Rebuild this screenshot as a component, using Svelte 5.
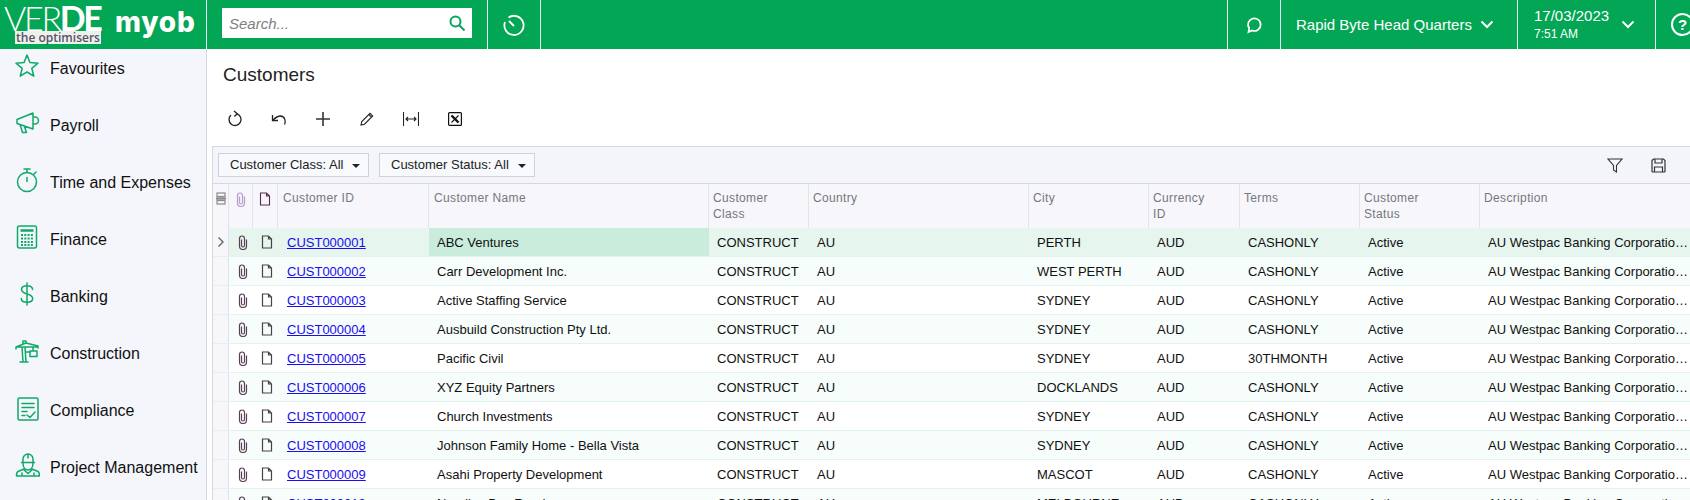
<script>
  const nav = ['Favourites','Payroll','Time and Expenses','Finance','Banking','Construction','Compliance','Project Management'];
  const rows = [
    ['CUST000001','ABC Ventures','PERTH','CASHONLY'],
    ['CUST000002','Carr Development Inc.','WEST PERTH','CASHONLY'],
    ['CUST000003','Active Staffing Service','SYDNEY','CASHONLY'],
    ['CUST000004','Ausbuild Construction Pty Ltd.','SYDNEY','CASHONLY'],
    ['CUST000005','Pacific Civil','SYDNEY','30THMONTH'],
    ['CUST000006','XYZ Equity Partners','DOCKLANDS','CASHONLY'],
    ['CUST000007','Church Investments','SYDNEY','CASHONLY'],
    ['CUST000008','Johnson Family Home - Bella Vista','SYDNEY','CASHONLY'],
    ['CUST000009','Asahi Property Development','MASCOT','CASHONLY'],
    ['CUST000010','Needles Bay Road','MELBOURNE','CASHONLY']
  ];
  const heads = [['Customer ID'],['Customer Name'],['Customer','Class'],['Country'],['City'],['Currency','ID'],['Terms'],['Customer','Status'],['Description']];
</script>

{#snippet clip(color)}
  <svg width="10" height="15" viewBox="0 0 10 15" fill="none" stroke={color} stroke-width="1.200"><path d="M8.500 4.500v6.500a3.500 3.500 0 0 1-7 0V3.500a2.500 2.500 0 0 1 5 0v7a1.500 1.500 0 0 1-3 0V4.500"/></svg>
{/snippet}
{#snippet doc(color)}
  <svg width="12" height="14" viewBox="0 0 12 14" fill="none" stroke={color} stroke-width="1.200"><path d="M1.500 1h6l3 3v9h-9zM7.500 1v3h3"/></svg>
{/snippet}

<div class="page">
  <header class="top">
    <div class="logo">
      <div class="verde">
        <div class="vword"><span class="thin">VER</span><b>DE</b></div>
        <div class="opt">the optimisers</div>
      </div>
      <div class="myob">myob</div>
    </div>
    <div class="searchcell">
      <div class="search">
        <span>Search...</span>
        <svg width="18" height="18" viewBox="0 0 18 18" fill="none" stroke="#04a65a" stroke-width="2"><circle cx="7.500" cy="7.500" r="5"/><path d="M11.500 11.500l5 5"/></svg>
      </div>
    </div>
    <div class="tcell clock">
      <svg width="24" height="24" viewBox="0 0 24 24" fill="none" stroke="#fff" stroke-width="1.800"><path d="M6.500 4.500A9.600 9.600 0 1 1 3 9"/><path d="M7 8l5 5"/></svg>
    </div>
    <div class="spacer"></div>
    <div class="tcell chat">
      <svg width="18" height="18" viewBox="0 0 18 18" fill="none" stroke="#fff" stroke-width="1.700"><path d="M3.500 16l.7-3.700A6.300 6.300 0 1 1 7 14.500z"/></svg>
    </div>
    <div class="tcell branch">
      <span>Rapid Byte Head Quarters</span>
      <svg width="14" height="9" viewBox="0 0 14 9" fill="none" stroke="#fff" stroke-width="2"><path d="M1.500 1.500L7 7l5.500-5.500"/></svg>
    </div>
    <div class="tcell dt">
      <div class="dtext"><div class="date">17/03/2023</div><div class="time">7:51 AM</div></div>
      <svg width="14" height="9" viewBox="0 0 14 9" fill="none" stroke="#fff" stroke-width="2"><path d="M1.500 1.500L7 7l5.500-5.500"/></svg>
    </div>
    <div class="tcell help">
      <div class="q">?</div>
    </div>
  </header>

  <div class="body">
    <nav class="side">
      {#each nav as n, i}
        <div class="item">
          <span class="ic">
            <svg width="26" height="26" viewBox="0 0 26 26" fill="none" stroke="#0fa968" stroke-width="1.500" stroke-linejoin="round" stroke-linecap="round">
              {#if i === 0}
                <path d="M13 2l3 7.600 8 .6-6.200 5.100 2 7.900L13 19l-6.800 4.200 2-7.900L2 10.200l8-.6z"/>
              {:else if i === 1}
                <path d="M3 9.500l16-6.500v16L3 13.500zM19 7h2a3 3 0 0 1 0 7h-2M6 14.500l2.500 8h4l-2.500-7M3 9.500v4"/>
              {:else if i === 2}
                <circle cx="13" cy="15" r="9.500"/><path d="M10 2h6M13 2v3.500M20 7l2-2M13 10.500v4"/>
              {:else if i === 3}
                <rect x="3.500" y="2" width="19" height="22" rx="2"/><path d="M6.500 6.500h13" stroke-width="2.500" stroke-linecap="butt"/><path d="M7 11h12M7 14.500h12M7 18h12M7 21h12" stroke-width="2" stroke-dasharray="2 1.300" stroke-linecap="butt"/>
              {:else if i === 4}
                <path d="M18.500 8.500c0-2.500-2.400-3.800-5.500-3.800s-5.500 1.300-5.500 3.800c0 5.500 11.200 3.500 11.200 9 0 2.600-2.500 3.800-5.700 3.800s-5.700-1.200-5.700-3.800M13 2v22"/>
              {:else if i === 5}
                <path d="M2 9l10-4 12 3M2 9h22M2 9v2M24 8v2M8 9l1 15M11 9l1 15M6 24h8M12 5V3h-3v3M11.500 14h5M19 10v3M16 13h7v5.500h-7z"/>
              {:else if i === 6}
                <rect x="4" y="3" width="20" height="22" rx="1.500"/><path d="M8 8.500h12M8 12.500h12M8 16.500h5M8 20.500h3M13 20l3 2.500 5-5.500"/>
              {:else}
                <path d="M7.500 10.500h13M9 10.500V7a5 5 0 0 1 10 0v3.500M14 2v4M9 11c0 4 2 7 5 7s5-3 5-7M10 17l-6 2.500c-1 .5-1.500 2-1.500 4.500h23c0-2.500-.5-4-1.500-4.500L18 17M10 18l4 3.500 4-3.500M8 24v-3M20 24v-3"/>
              {/if}
            </svg>
          </span>
          <span class="lbl">{n}</span>
        </div>
      {/each}
    </nav>

    <main class="main">
      <h1>Customers</h1>
      <div class="tools">
        <span class="tool"><svg width="16" height="18" viewBox="0 0 16 18" fill="none" stroke="#222" stroke-width="1.300"><path d="M4 5a6 6 0 1 0 6-1.200"/><path d="M7 1l3.300 2.800L7.300 6.500"/></svg></span>
        <span class="tool"><svg width="16" height="14" viewBox="0 0 16 14" fill="none" stroke="#222" stroke-width="1.300"><path d="M13.500 12.500c1.500-3 .5-8.500-4-8.500C7 4 5 5 2 8"/><path d="M1.500 3v5.500H7"/></svg></span>
        <span class="tool"><svg width="14" height="14" viewBox="0 0 14 14" stroke="#333" stroke-width="1.600"><path d="M7 0v14M0 7h14"/></svg></span>
        <span class="tool"><svg width="14" height="14" viewBox="0 0 14 14" fill="none" stroke="#222" stroke-width="1.100"><path d="M1 13l.8-3.500L10 1.300l2.700 2.700-8.200 8.200zM8.800 2.500l2.700 2.700"/></svg></span>
        <span class="tool"><svg width="16" height="14" viewBox="0 0 16 14" fill="none" stroke="#222" stroke-width="1.100"><path d="M.5 0v14M15.500 0v14M3 7h10M5 5L3 7l2 2M11 5l2 2-2 2"/></svg></span>
        <span class="tool"><svg width="14" height="14" viewBox="0 0 14 14" fill="none" stroke="#111" stroke-width="1.200"><rect x=".6" y=".6" width="12.800" height="12.800" rx="1"/><path d="M3.500 3.500l7 7" stroke-width="2.400"/><path d="M10.500 3.500l-7 7" stroke-width="1.100"/></svg></span>
      </div>

      <section class="grid">
        <div class="filters">
          <div class="fbtn f1">Customer Class: All<i class="caret"></i></div>
          <div class="fbtn f2">Customer Status: All<i class="caret"></i></div>
          <div class="spacer"></div>
          <svg class="funnel" width="16" height="15" viewBox="0 0 16 15" fill="none" stroke="#333" stroke-width="1.100"><path d="M1 1h14L9.500 7.500V14L6.500 12V7.500z"/></svg>
          <svg class="save" width="15" height="15" viewBox="0 0 15 15" fill="none" stroke="#333" stroke-width="1.200"><path d="M1 2.500 2.500 1h10L14 2.500v11l-.5.500h-12l-.5-.5zM4 1v4h7V1M3.500 14V9h8v5"/></svg>
        </div>
        <div class="row head">
          <div class="c sel first">
            <svg width="12" height="13" viewBox="0 0 12 13" fill="none" stroke="#8b8b8b" stroke-width="1.200"><rect x="2" y="1" width="8" height="3.500"/><path d="M1 6.500h10" stroke-width="2.400"/><rect x="2" y="8.500" width="8" height="3.500"/></svg>
          </div>
          <div class="c ic1">
            <svg width="10" height="15" viewBox="0 0 10 15" fill="none" stroke="#b99bd1" stroke-width="1.200"><path d="M8.500 4.500v6.500a3.500 3.500 0 0 1-7 0V3.500a2.500 2.500 0 0 1 5 0v7a1.500 1.500 0 0 1-3 0V4.500"/></svg>
          </div>
          <div class="c ic1">
            <svg width="12" height="14" viewBox="0 0 12 14" fill="none" stroke="#5c2a4e" stroke-width="1.100"><path d="M1.500 1h6l3 3v9h-9zM7.500 1v3h3"/></svg>
          </div>
          {#each heads as h, j}
            <div class="c htxt" class:wide={j < 2}>{#each h as l}<div>{l}</div>{/each}</div>
          {/each}
        </div>
        {#each rows as r, i}
          <div class="row dat" class:active={i === 0} class:alt={i % 2 === 1}>
            <div class="c sel">{#if i === 0}<svg width="8" height="12" viewBox="0 0 8 12" fill="none" stroke="#666" stroke-width="1.400"><path d="M1.500 1.500 6 6l-4.500 4.500"/></svg>{/if}</div>
            <div class="c mid">{@render clip('#5b3f57')}</div>
            <div class="c mid">{@render doc('#444')}</div>
            <div class="c idc"><a href="#c" class="lnk">{r[0]}</a></div>
            <div class="c name">{r[1]}</div>
            <div class="c">CONSTRUCT</div>
            <div class="c">AU</div>
            <div class="c">{r[2]}</div>
            <div class="c">AUD</div>
            <div class="c">{r[3]}</div>
            <div class="c">Active</div>
            <div class="c desc">AU Westpac Banking Corporation Limited</div>
          </div>
        {/each}
      </section>
    </main>
  </div>
</div>

<style>
  :global(body) { margin: 0; background: #fff; }
  .page { width: 1690px; height: 500px; overflow: hidden; font-family: "Liberation Sans", Arial, sans-serif; color: #111; display: flex; flex-direction: column; }
  .top { height: 49px; flex: none; background: #03a654; display: flex; color: #fff; }
  .logo { width: 206px; box-sizing: border-box; padding: 5px 0 0 4px; display: flex; align-items: flex-start; }
  .verde { width: 97px; }
  .vword { height: 26px; font-family: "Lato", sans-serif; font-size: 34px; line-height: 25px; letter-spacing: -2.300px; color: #fff; white-space: nowrap; }
  .thin { font-weight: 300; }
  .vword b { font-weight: 700; }
  .opt { margin: 0 0 0 11px; height: 13px; background: #eef0ee; color: #55555f; font-family: "Open Sans", sans-serif; font-size: 12px; font-weight: 600; line-height: 13px; text-align: center; white-space: nowrap; }
  .myob { margin: 0 0 0 14px; font-family: "Inter", sans-serif; font-weight: 800; font-size: 28px; line-height: 34px; letter-spacing: .8px; color: #fff; }
  .searchcell { width: 281px; box-sizing: border-box; border-left: 1px solid #e6f6ee; padding: 8px 0 0 15px; }
  .search { width: 250px; height: 30px; background: #fff; display: flex; align-items: center; justify-content: space-between; box-sizing: border-box; padding: 0 6px 0 7px; color: #808080; font-style: italic; font-size: 15px; }
  .tcell { border-left: 1px solid #e6f6ee; box-sizing: border-box; display: flex; align-items: center; }
  .clock { width: 54px; justify-content: center; border-right: 1px solid #e6f6ee; }
  .spacer { flex: 1; }
  .chat { width: 53px; justify-content: center; }
  .branch { width: 237px; padding-left: 15px; font-size: 15px; gap: 8px; }
  .dt { width: 138px; padding-left: 16px; gap: 13px; }
  .dtext { width: 74px; }
  .date { font-size: 15px; line-height: 18px; }
  .time { font-size: 12px; line-height: 15px; margin-top: 2px; font-weight: 400; }
  .help { width: 35px; padding-left: 15px; overflow: hidden; }
  .q { width: 19px; height: 19px; flex: none; border: 2px solid #fff; border-radius: 50%; font-size: 15px; font-weight: 700; text-align: center; line-height: 19px; }
  .body { flex: 1; display: flex; min-height: 0; }
  .side { width: 207px; flex: none; box-sizing: border-box; background: #f4f6fb; border-right: 1px solid #d4d6de; }
  .item { height: 57px; display: flex; align-items: flex-start; padding: 8px 0 0 14px; box-sizing: border-box; }
  .ic { width: 36px; height: 24px; display: block; margin-top: -4px; }
  .lbl { font-size: 16px; line-height: 24px; white-space: nowrap; color: #111; }
  .main { flex: 1; min-width: 0; padding: 0 0 0 5px; }
  h1 { margin: 0; padding: 14px 0 0 11px; height: 34px; font-size: 19px; font-weight: 400; line-height: 24px; color: #222; box-sizing: content-box; }
  .tools { display: flex; align-items: center; height: 36px; padding-left: 1px; margin-top: 4px; }
  .tool { width: 44px; height: 36px; display: flex; align-items: center; justify-content: center; }
  .grid { margin-top: 9px; border-top: 1px solid #d6d8e0; border-left: 1px solid #d6d8e0; }
  .filters { height: 36px; box-sizing: border-box; background: #f4f5fa; display: flex; align-items: center; padding: 0 0 0 5px; }
  .fbtn { height: 24px; box-sizing: border-box; border: 1px solid #d0d2d8; background: #f8f9fc; font-size: 13px; line-height: 22px; padding-left: 11px; position: relative; color: #222; }
  .f1 { width: 151px; margin-right: 10px; }
  .f2 { width: 156px; }
  .caret { position: absolute; right: 8px; top: 10px; border: 4px solid transparent; border-top-color: #222; border-bottom: 0; }
  .funnel { margin-right: 28px; }
  .save { margin-right: 24px; }
  .row { display: grid; grid-template-columns: 16px 24px 25px 151px 280px 100px 220px 120px 91px 120px 120px 211px; }
  .head { height: 45px; background: #f6f6fb; border-top: 1px solid #d6d8e0; box-sizing: border-box; }
  .head .c { border-right: 1px solid #e2e3ea; height: 44px; box-sizing: border-box; padding: 6px 0 0 4px; display: block; }
  .head .wide { padding-left: 5px; }
  .head .first, .head .ic1 { padding: 0; display: flex; justify-content: center; align-items: flex-start; padding-top: 8px; }
  .htxt { font-size: 12px; letter-spacing: .35px; line-height: 16px; color: #77777f; }
  .dat { height: 29px; box-sizing: border-box; border-bottom: 1px solid #e2f3ef; background: #fff; }
  .dat.alt { background: #f6fdfb; }
  .dat.active { background: #e6f5ee; }
  .dat.active .name { background: #c9ecdc; }
  .dat .c { font-size: 13px; line-height: 29px; padding-left: 8px; white-space: nowrap; overflow: hidden; color: #111; box-sizing: border-box; }
  .dat .sel { background: #f6f6fb; padding: 0; display: flex; align-items: center; justify-content: center; border-right: 1px solid #e2e3ea; }
  .dat .mid { padding: 3px 0 0 3px; display: flex; align-items: flex-start; justify-content: center; padding-top: 7px; }
  .dat .idc { padding-left: 9px; }
  .lnk { color: #1a0dee; text-decoration: underline; }
  .desc { text-overflow: ellipsis; }
</style>
